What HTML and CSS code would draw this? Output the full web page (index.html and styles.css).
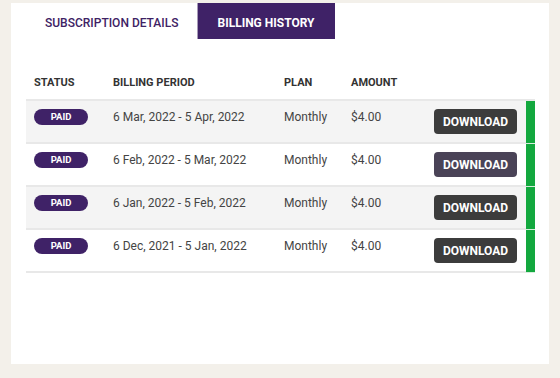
FILE: index.html
```html
<!DOCTYPE html>
<html lang="en">
<head>
    <meta charset="UTF-8">
    <title>Billing History</title>
    <link rel="stylesheet" href="styles.css">
</head>
<body>
    <div class="card">
        <div class="tabs">
            <div class="tab">Subscription Details</div>
            <div class="tab active">Billing History</div>
        </div>

        <table class="billing">
            <thead>
                <tr>
                    <th class="col-status">Status</th>
                    <th class="col-period">Billing Period</th>
                    <th class="col-plan">Plan</th>
                    <th class="col-amount">Amount</th>
                    <th class="col-action"></th>
                    <th class="col-flag"></th>
                </tr>
            </thead>
            <tbody>
                <tr>
                    <td><span class="badge">Paid</span></td>
                    <td>6 Mar, 2022 - 5 Apr, 2022</td>
                    <td>Monthly</td>
                    <td>$4.00</td>
                    <td class="action"><button class="download-btn">Download</button></td>
                    <td class="flag"></td>
                </tr>
                <tr>
                    <td><span class="badge">Paid</span></td>
                    <td>6 Feb, 2022 - 5 Mar, 2022</td>
                    <td>Monthly</td>
                    <td>$4.00</td>
                    <td class="action"><button class="download-btn hover">Download</button></td>
                    <td class="flag"></td>
                </tr>
                <tr>
                    <td><span class="badge">Paid</span></td>
                    <td>6 Jan, 2022 - 5 Feb, 2022</td>
                    <td>Monthly</td>
                    <td>$4.00</td>
                    <td class="action"><button class="download-btn">Download</button></td>
                    <td class="flag"></td>
                </tr>
                <tr>
                    <td><span class="badge">Paid</span></td>
                    <td>6 Dec, 2021 - 5 Jan, 2022</td>
                    <td>Monthly</td>
                    <td>$4.00</td>
                    <td class="action"><button class="download-btn">Download</button></td>
                    <td class="flag"></td>
                </tr>
            </tbody>
        </table>
    </div>
</body>
</html>
```

FILE: styles.css
```css
* {
    margin: 0;
    padding: 0;
    box-sizing: border-box;
}

body {
    font-family: Roboto, 'Liberation Sans', sans-serif;
    background: #f3f0ea;
    color: #444;
    padding: 3px 11px 0 11px;
}

.card {
    background: white;
    height: 361px;
    padding: 0 14px 0 15px;
}

.tabs {
    display: flex;
    height: 36px;
}

.tab {
    padding: 3px 19px 0 19px;
    display: flex;
    align-items: center;
    font-size: 12px;
    font-weight: 500;
    text-transform: uppercase;
    color: #3e2264;
}

.tab.active {
    padding: 3px 20px 0 19px;
    background: #3f2267;
    color: white;
    font-weight: bold;
    border-left: 1px solid #a89bb8;
}

.billing {
    margin-top: 37px;
    width: 100%;
    border-collapse: collapse;
}

.billing th {
    text-align: left;
    font-size: 11px;
    font-weight: bold;
    text-transform: uppercase;
    color: #333;
    padding: 0 0 10px 8px;
    border-bottom: 2px solid #e8e8e8;
}

.col-status { width: 79px; }
.col-period { width: 171px; }
.col-plan { width: 67px; }
.col-amount { width: 83px; }
.col-flag { width: 9px; }

.billing td {
    vertical-align: top;
    font-size: 12px;
    line-height: 16px;
    padding: 8px 0 7px 8px;
    border-bottom: 2px solid #e8e8e8;
    height: 43px;
}

.billing tbody tr:nth-child(odd) {
    background: #f4f4f4;
}

.badge {
    display: inline-block;
    vertical-align: top;
    width: 54px;
    height: 16px;
    line-height: 16px;
    border-radius: 8px;
    background: #3f2267;
    color: white;
    font-size: 9.5px;
    font-weight: bold;
    text-align: center;
    text-transform: uppercase;
}

.billing td.action {
    text-align: right;
    padding-right: 9px;
}

.download-btn {
    vertical-align: top;
    width: 83px;
    height: 25px;
    border: none;
    border-radius: 4px;
    background: #3c3c3c;
    color: white;
    font-family: Roboto, 'Liberation Sans', sans-serif;
    font-size: 12px;
    font-weight: bold;
    text-transform: uppercase;
}

.download-btn.hover {
    background: #4a4357;
}

.billing td.flag {
    background: #13a83e;
    padding: 0;
    border-bottom: 1px solid #d6eedc;
}
```
